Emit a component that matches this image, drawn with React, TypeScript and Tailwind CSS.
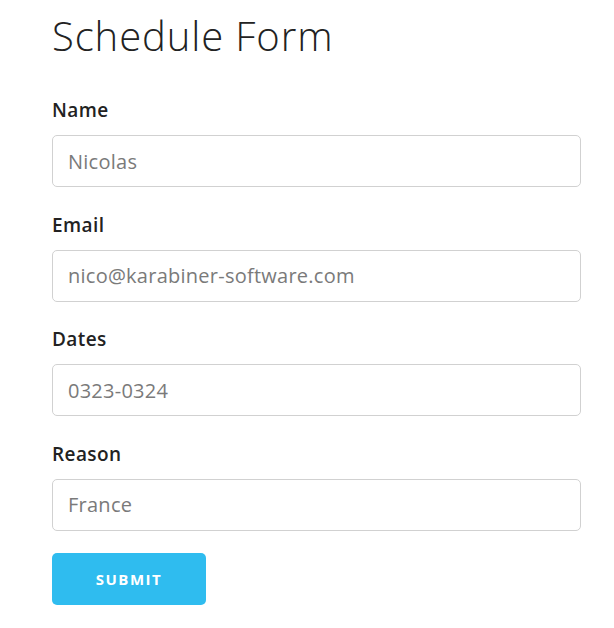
export default function App() {
  const fields = [
    { label: "Name", value: "Nicolas" },
    { label: "Email", value: "nico@karabiner-software.com" },
    { label: "Dates", value: "0323-0324" },
    { label: "Reason", value: "France" },
  ];

  return (
    <div className="min-h-screen bg-white pl-[52px] pr-[33px] pt-[12px] font-['Open_Sans','Lato',sans-serif] text-[#222]">
      <h1 className="text-[40px] font-light leading-[48px] tracking-[0.9px]">Schedule Form</h1>
      <form className="mt-[37px]" onSubmit={(e) => e.preventDefault()}>
        <div className="flex flex-col gap-[24.6px]">
          {fields.map((f) => (
            <div key={f.label}>
              <label className="mb-[11px] block text-[19px] font-semibold leading-[27px] tracking-[0.4px]">{f.label}</label>
              <input
                readOnly
                value={f.value}
                className="block h-[52px] w-full rounded-[5px] border border-[#d1d1d1] bg-white px-[15px] text-[20px] tracking-[0.25px] text-[#7a7a7a] outline-none"
              />
            </div>
          ))}
        </div>
        <button
          type="submit"
          className="mt-[22px] h-[52px] w-[154px] rounded-[5px] bg-[#2fbcef] text-[15px] font-bold tracking-[1.5px] text-white"
        >
          SUBMIT
        </button>
      </form>
    </div>
  );
}
